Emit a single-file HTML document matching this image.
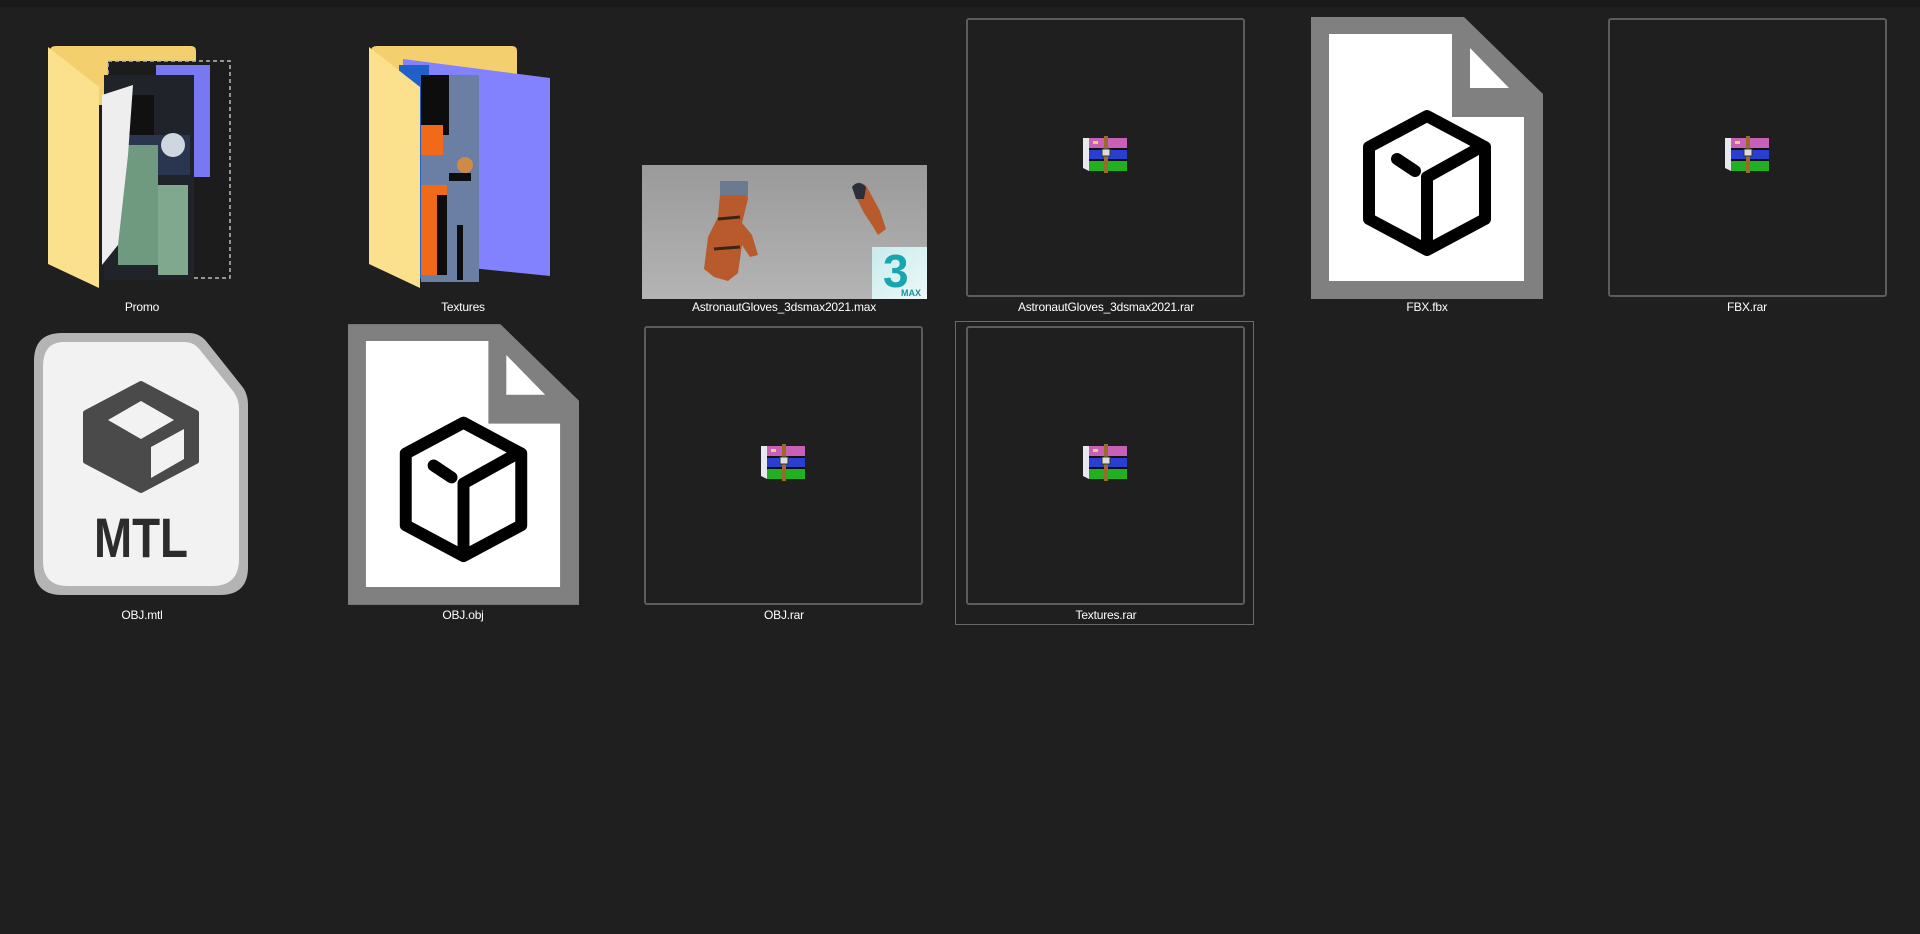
<!DOCTYPE html>
<html><head><meta charset="utf-8"><style>
html,body{margin:0;padding:0;width:1920px;height:934px;overflow:hidden;background:#1f1f1f;font-family:"Liberation Sans",sans-serif;}
.top{position:absolute;left:0;top:0;width:1920px;height:7px;background:#191919;}
.a{position:absolute;}
.lbl{position:absolute;color:#ffffff;font-size:12px;width:300px;text-align:center;line-height:14px;letter-spacing:-0.2px;}
.box{position:absolute;border:2px solid #5c5c5c;border-radius:3px;background:#1f1f1f;box-sizing:border-box;}
</style></head><body>
<div class="top"></div>

<svg width="0" height="0" style="position:absolute">
<defs>
<g id="rar">
<rect x="6" y="3" width="38" height="11" fill="#c860b8"/>
<rect x="6" y="14" width="38" height="11" fill="#2a3fd0"/>
<rect x="6" y="25" width="38" height="11" fill="#22b022"/>
<rect x="6" y="13" width="38" height="2" fill="#111"/>
<rect x="6" y="24" width="38" height="2" fill="#111"/>
<polygon points="0,3 6,3 6,36 0,33" fill="#e8e8f0"/>
<rect x="21" y="1" width="4" height="37" fill="#9a6a2a"/>
<rect x="19" y="14" width="8" height="7" fill="#ddd" stroke="#333" stroke-width="1"/>
<rect x="10" y="6" width="5" height="3" fill="#e8d070"/>
</g>
<g id="cube" fill="none" stroke="#000" stroke-width="12" stroke-linecap="round" stroke-linejoin="round">
<polygon points="0,-67 58,-36 58,36 0,67 -58,36 -58,-36"/>
<path d="M0,63 L0,-6 L54,-36"/>
<path d="M-30,-24 L-12,-12"/>
</g>
</defs>
</svg>

<!-- Promo folder -->
<svg class="a" style="left:48px;top:45px" width="184" height="248" viewBox="0 0 184 248">
<path d="M2,6 Q2,1 8,1 L143,1 Q148,1 148,6 L148,60 L2,60Z" fill="#f4cf6e"/>
<rect x="60" y="16" width="122" height="217" fill="#1c1c1c" stroke="#bbb" stroke-width="1.5" stroke-dasharray="4,3"/>
<rect x="129" y="24" width="10" height="78" fill="#bdbdbd"/>
<rect x="108" y="20" width="54" height="112" fill="#7878f0"/>
<rect x="56" y="30" width="90" height="205" fill="#20232a"/>
<rect x="62" y="50" width="44" height="42" fill="#111"/>
<rect x="62" y="90" width="80" height="40" fill="#2a3550"/>
<rect x="70" y="100" width="40" height="120" fill="#6f9a80"/>
<rect x="110" y="140" width="30" height="90" fill="#7fa88e"/>
<path d="M54,50 L85,40 L80,110 L70,200 L54,220Z" fill="#eeeeee"/>
<circle cx="125" cy="100" r="12" fill="#cfd6e0"/>
<polygon points="0,2 51,42 51,243 0,219" fill="#fbe08e"/>
</svg>
<div class="lbl" style="left:-8px;top:300px">Promo</div>

<!-- Textures folder -->
<svg class="a" style="left:369px;top:45px" width="184" height="248" viewBox="0 0 184 248">
<path d="M2,6 Q2,1 8,1 L143,1 Q148,1 148,6 L148,60 L2,60Z" fill="#f4cf6e"/>
<polygon points="34,14 181,33 181,231 34,216" fill="#8282ff"/>
<polygon points="30,20 60,20 60,235 30,230" fill="#2060c8"/>
<rect x="52" y="30" width="58" height="207" fill="#6a7fa3"/>
<rect x="52" y="30" width="28" height="60" fill="#0d0d0d"/>
<rect x="52" y="80" width="22" height="30" fill="#f06a1a"/>
<rect x="52" y="140" width="26" height="90" fill="#f06a1a"/>
<rect x="68" y="150" width="10" height="80" fill="#0d0d0d"/>
<rect x="88" y="180" width="6" height="55" fill="#0d0d0d"/>
<rect x="80" y="128" width="22" height="8" fill="#0d0d0d"/>
<circle cx="96" cy="120" r="8" fill="#d08a48"/>
<polygon points="0,2 51,42 51,243 0,219" fill="#fbe08e"/>
</svg>
<div class="lbl" style="left:313px;top:300px">Textures</div>

<!-- Max thumbnail -->
<svg class="a" style="left:642px;top:165px" width="285" height="134" viewBox="0 0 285 134">
<defs><linearGradient id="mg" x1="0" y1="0" x2="0" y2="1"><stop offset="0" stop-color="#9a9a9a"/><stop offset="1" stop-color="#b4b4b4"/></linearGradient>
<linearGradient id="lg" x1="0" y1="0" x2="1" y2="1"><stop offset="0" stop-color="#c8ecec"/><stop offset="1" stop-color="#eef8f8"/></linearGradient></defs>
<rect width="285" height="134" fill="url(#mg)"/>
<path d="M79,18 L104,16 L106,34 L100,58 L110,70 L116,90 L108,92 L100,80 L96,108 L86,116 L72,112 L62,104 L66,72 L76,52 Z" fill="#b85a2c"/>
<rect x="78" y="16" width="28" height="14" fill="#6a7a90"/>
<path d="M72,84 L98,82" stroke="#3a2418" stroke-width="3"/>
<path d="M76,54 L98,52" stroke="#3a2418" stroke-width="3"/>
<path d="M212,20 Q220,14 226,24 L238,46 L244,64 L236,70 L230,60 L222,48 L214,32Z" fill="#b85a2c"/>
<path d="M210,22 Q216,14 224,22 L222,34 L214,34Z" fill="#2a2f3a"/>
<rect x="230" y="82" width="55" height="52" fill="url(#lg)"/>
<text x="241" y="122" font-family="Liberation Sans" font-weight="bold" font-size="46" fill="#16a6ae">3</text>
<text x="259" y="131" font-family="Liberation Sans" font-weight="bold" font-size="9" fill="#1590a0">MAX</text>
</svg>
<div class="lbl" style="left:634px;top:300px">AstronautGloves_3dsmax2021.max</div>

<div class="box" style="left:966px;top:18px;width:279px;height:279px"></div>
<svg class="a" style="left:1083px;top:135px" width="46" height="40" viewBox="0 0 46 40"><use href="#rar"/></svg>
<div class="lbl" style="left:956px;top:300px">AstronautGloves_3dsmax2021.rar</div>

<!-- FBX -->
<svg class="a" style="left:1311px;top:17px" width="232" height="282" viewBox="0 0 232 282">
<polygon points="0,0 153,0 232,77 232,282 0,282" fill="#808080"/>
<polygon points="18,17 141,17 141,100 213,100 213,264 18,264" fill="#fff"/>
<polygon points="159,31 198,71 159,71" fill="#fff"/>
<use href="#cube" transform="translate(116,166)"/>
</svg>
<div class="lbl" style="left:1277px;top:300px">FBX.fbx</div>

<div class="box" style="left:1608px;top:18px;width:279px;height:279px"></div>
<svg class="a" style="left:1725px;top:135px" width="46" height="40" viewBox="0 0 46 40"><use href="#rar"/></svg>
<div class="lbl" style="left:1597px;top:300px">FBX.rar</div>

<!-- MTL -->
<svg class="a" style="left:34px;top:333px" width="214" height="262" viewBox="0 0 214 262">
<path d="M28,0 L155,0 Q165,0 172,8 L207,52 Q214,60 214,72 L214,234 Q214,262 186,262 L28,262 Q0,262 0,234 L0,28 Q0,0 28,0Z" fill="#b4b4b4"/>
<path d="M30,9 L150,9 Q160,9 166,17 L199,58 Q205,66 205,76 L205,226 Q205,253 178,253 L34,253 Q9,253 9,228 L9,34 Q9,9 30,9Z" fill="#f2f2f2"/>
<polygon points="107,51 162,80 162,128 107,157 52,128 52,80" fill="#4a4a4a" stroke="#4a4a4a" stroke-width="6" stroke-linejoin="round"/>
<polygon points="107,68 140,87 107,106 74,87" fill="#f2f2f2"/>
<polygon points="117,114 150,96 150,126 117,145" fill="#f2f2f2"/>
<text x="107" y="224" text-anchor="middle" font-family="Liberation Sans" font-weight="bold" font-size="56" fill="#2c2c2c" textLength="94" lengthAdjust="spacingAndGlyphs">MTL</text>
</svg>
<div class="lbl" style="left:-8px;top:608px">OBJ.mtl</div>

<!-- OBJ.obj -->
<svg class="a" style="left:348px;top:324px" width="231" height="281" viewBox="0 0 232 282">
<polygon points="0,0 153,0 232,77 232,282 0,282" fill="#808080"/>
<polygon points="18,17 141,17 141,100 213,100 213,264 18,264" fill="#fff"/>
<polygon points="159,31 198,71 159,71" fill="#fff"/>
<use href="#cube" transform="translate(116,166)"/>
</svg>
<div class="lbl" style="left:313px;top:608px">OBJ.obj</div>

<div class="box" style="left:644px;top:326px;width:279px;height:279px"></div>
<svg class="a" style="left:761px;top:443px" width="46" height="40" viewBox="0 0 46 40"><use href="#rar"/></svg>
<div class="lbl" style="left:634px;top:608px">OBJ.rar</div>

<div class="a" style="left:955px;top:321px;width:299px;height:304px;border:1px solid #6a6a6a;box-sizing:border-box"></div>
<div class="box" style="left:966px;top:326px;width:279px;height:279px"></div>
<svg class="a" style="left:1083px;top:443px" width="46" height="40" viewBox="0 0 46 40"><use href="#rar"/></svg>
<div class="lbl" style="left:956px;top:608px">Textures.rar</div>
</body></html>
